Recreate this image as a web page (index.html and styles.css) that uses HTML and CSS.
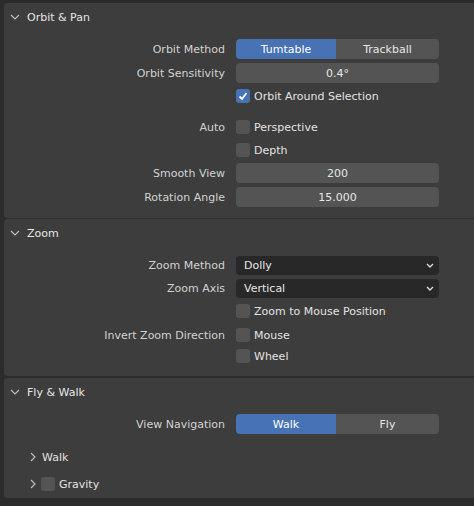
FILE: index.html
```html
<!DOCTYPE html>
<html>
<head>
<meta charset="utf-8">
<link rel="stylesheet" href="styles.css">
</head>
<body>
<div class="panel p1">
  <div class="header"><svg class="chev" width="10" height="6" viewBox="0 0 10 6"><polyline points="1,1 5,5 9,1" fill="none" stroke="#bdbdbd" stroke-width="1.2"/></svg>Orbit &amp; Pan</div>
  <div class="body">
    <div class="row r1"><div class="label">Orbit Method</div><div class="ctrl seg"><div class="opt on">Tumtable</div><div class="opt">Trackball</div></div></div>
    <div class="row r2"><div class="label">Orbit Sensitivity</div><div class="ctrl num">0.4°</div></div>
    <div class="row r3"><div class="label"></div><div class="ctrl chk"><span class="box on"><svg width="12" height="12" viewBox="0 0 12 12"><polyline points="2.5,6.5 5,9 9.5,3" fill="none" stroke="#fff" stroke-width="1.8"/></svg></span>Orbit Around Selection</div></div>
    <div class="row r4"><div class="label">Auto</div><div class="ctrl chk"><span class="box"></span>Perspective</div></div>
    <div class="row r5"><div class="label"></div><div class="ctrl chk"><span class="box"></span>Depth</div></div>
    <div class="row r6"><div class="label">Smooth View</div><div class="ctrl num">200</div></div>
    <div class="row r7"><div class="label">Rotation Angle</div><div class="ctrl num">15.000</div></div>
  </div>
</div>
<div class="panel p2">
  <div class="header"><svg class="chev" width="10" height="6" viewBox="0 0 10 6"><polyline points="1,1 5,5 9,1" fill="none" stroke="#bdbdbd" stroke-width="1.2"/></svg>Zoom</div>
  <div class="body">
    <div class="row z1"><div class="label">Zoom Method</div><div class="ctrl drop">Dolly<svg class="dchev" width="8" height="5" viewBox="0 0 8 5"><polyline points="1,1 4,4 7,1" fill="none" stroke="#e0e0e0" stroke-width="1.3"/></svg></div></div>
    <div class="row z2"><div class="label">Zoom Axis</div><div class="ctrl drop">Vertical<svg class="dchev" width="8" height="5" viewBox="0 0 8 5"><polyline points="1,1 4,4 7,1" fill="none" stroke="#e0e0e0" stroke-width="1.3"/></svg></div></div>
    <div class="row z3"><div class="label"></div><div class="ctrl chk"><span class="box"></span>Zoom to Mouse Position</div></div>
    <div class="row z4"><div class="label">Invert Zoom Direction</div><div class="ctrl chk"><span class="box"></span>Mouse</div></div>
    <div class="row z5"><div class="label"></div><div class="ctrl chk"><span class="box"></span>Wheel</div></div>
  </div>
</div>
<div class="panel p3">
  <div class="header"><svg class="chev" width="10" height="6" viewBox="0 0 10 6"><polyline points="1,1 5,5 9,1" fill="none" stroke="#bdbdbd" stroke-width="1.2"/></svg>Fly &amp; Walk</div>
  <div class="body">
    <div class="row f1"><div class="label">View Navigation</div><div class="ctrl seg"><div class="opt on">Walk</div><div class="opt">Fly</div></div></div>
    <div class="sub s1"><svg class="schev" width="6" height="10" viewBox="0 0 6 10"><polyline points="1,1 5,5 1,9" fill="none" stroke="#bdbdbd" stroke-width="1.2"/></svg>Walk</div>
    <div class="sub s2"><svg class="schev" width="6" height="10" viewBox="0 0 6 10"><polyline points="1,1 5,5 1,9" fill="none" stroke="#bdbdbd" stroke-width="1.2"/></svg><span class="box"></span>Gravity</div>
  </div>
</div>
</body>
</html>
```

FILE: styles.css
```css
html, body {
  margin: 0;
  padding: 0;
  background: #2c2c2c;
  width: 474px;
  height: 506px;
  overflow: hidden;
}
body {
  font-family: "DejaVu Sans", sans-serif;
  font-size: 11px;
  color: #e2e2e2;
  padding-top: 3px;
  box-sizing: border-box;
}
.panel {
  background: #3d3d3d;
  margin-left: 4px;
  border-radius: 4px 0 0 4px;
}
.p2 { margin-top: 1px; }
.p3 { margin-top: 2px; }
.header {
  height: 28px;
  display: flex;
  align-items: center;
  font-size: 11px;
  color: #e6e6e6;
}
.chev { margin-left: 6px; margin-right: 7px; }
.body { display: flex; flex-direction: column; }
.p1 .body { padding-top: 8px; padding-bottom: 11px; }
.p2 .body { padding-top: 8px; padding-bottom: 10px; }
.p3 .body { padding-top: 8px; padding-bottom: 4px; }
.row {
  display: flex;
  align-items: center;
  height: 20px;
}
.label {
  width: 221px;
  text-align: right;
  color: #d2d2d2;
  flex: none;
}
.ctrl {
  margin-left: 11px;
  width: 203px;
  height: 20px;
  flex: none;
  box-sizing: border-box;
  border-radius: 4px;
  display: flex;
  align-items: center;
}
.r2 { margin-top: 4px; }
.r3 { margin-top: 3px; }
.r4 { margin-top: 11px; }
.r5 { margin-top: 3px; }
.r6 { margin-top: 3px; }
.r7 { margin-top: 4px; }
.seg { overflow: hidden; }
.opt {
  height: 100%;
  display: flex;
  align-items: center;
  justify-content: center;
  background: #545454;
  color: #e6e6e6;
}
.seg .opt:first-child { width: 100px; }
.seg .opt:last-child { flex: 1; }
.opt.on { background: #4772b3; color: #ffffff; }
.num {
  background: #545454;
  justify-content: center;
  color: #e6e6e6;
}
.chk { background: transparent; color: #e2e2e2; }
.box {
  width: 14px;
  height: 14px;
  border-radius: 3px;
  background: #545454;
  margin-right: 4px;
  flex: none;
  display: flex;
  align-items: center;
  justify-content: center;
}
.box.on { background: #4772b3; }
.drop {
  background: #282828;
  height: 19px;
  padding-left: 8px;
  justify-content: space-between;
  padding-right: 5px;
  color: #e6e6e6;
}
.z2 { margin-top: 3px; }
.z3 { margin-top: 3px; }
.z4 { margin-top: 4px; }
.z5 { margin-top: 1px; }
.sub {
  display: flex;
  align-items: center;
  height: 20px;
  padding-left: 26px;
  color: #e2e2e2;
}
.schev { margin-right: 6px; }
.s1 { margin-top: 13px; }
.s2 { margin-top: 7px; }
.s2 .schev { margin-right: 5px; }
```
